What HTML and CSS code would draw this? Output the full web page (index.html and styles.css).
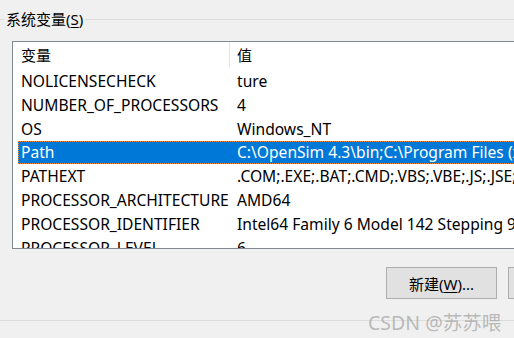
FILE: index.html
```html
<!DOCTYPE html>
<html lang="zh-CN">
<head>
    <meta charset="UTF-8">
    <title>系统变量</title>
    <link rel="stylesheet" href="styles.css">
</head>
<body>
    <div class="group-head">
        <span class="rule-short"></span>
        <span class="group-label">系统变量(<u>S</u>)</span>
        <span class="rule"></span>
    </div>

    <div class="listview">
        <div class="lv-row lv-head">
            <div class="col-name">变量</div>
            <div class="col-value">值</div>
        </div>
        <div class="lv-row">
            <div class="col-name">NOLICENSECHECK</div>
            <div class="col-value">ture</div>
        </div>
        <div class="lv-row">
            <div class="col-name">NUMBER_OF_PROCESSORS</div>
            <div class="col-value">4</div>
        </div>
        <div class="lv-row">
            <div class="col-name">OS</div>
            <div class="col-value">Windows_NT</div>
        </div>
        <div class="lv-row selected">
            <div class="col-name">Path</div>
            <div class="col-value">C:\OpenSim 4.3\bin;C:\Program Files (x86)\Common Files\Oracle\Java\javapath</div>
        </div>
        <div class="lv-row">
            <div class="col-name">PATHEXT</div>
            <div class="col-value">.COM;.EXE;.BAT;.CMD;.VBS;.VBE;.JS;.JSE;.WSF;.WSH;.MSC</div>
        </div>
        <div class="lv-row">
            <div class="col-name">PROCESSOR_ARCHITECTURE</div>
            <div class="col-value">AMD64</div>
        </div>
        <div class="lv-row">
            <div class="col-name">PROCESSOR_IDENTIFIER</div>
            <div class="col-value">Intel64 Family 6 Model 142 Stepping 9, GenuineIntel</div>
        </div>
        <div class="lv-row">
            <div class="col-name">PROCESSOR_LEVEL</div>
            <div class="col-value">6</div>
        </div>
    </div>

    <div class="buttons">
        <button>新建(<u>W</u>)...</button>
        <button>编辑(<u>I</u>)...</button>
    </div>

    <div class="bottom-rule"></div>

    <div class="watermark">CSDN @苏苏喂</div>
</body>
</html>
```

FILE: styles.css
```css
html, body {
    margin: 0;
    height: 100%;
    overflow: hidden;
}
body {
    position: relative;
    background-color: #f0f0f0;
    font-family: "Noto Sans", "Noto Sans CJK SC", sans-serif;
    font-size: 15px;
    color: #000;
}
u {
    text-decoration-thickness: 1px;
    text-underline-offset: 2px;
}
.group-head {
    display: flex;
    align-items: center;
    height: 38px;
}
.rule-short {
    width: 4px;
    border-top: 1px solid #dcdcdc;
}
.group-label {
    padding: 0 2px;
    line-height: 20px;
}
.rule {
    flex: 1;
    border-top: 1px solid #dcdcdc;
}
.listview {
    margin: 3px 0 0 12px;
    width: 620px;
    height: 206px;
    border: 1px solid #828790;
    background-color: #fff;
    overflow: hidden;
    font-size: 15.6px;
}
.lv-row {
    display: flex;
    height: 24px;
    line-height: 24px;
    white-space: nowrap;
}
.lv-head {
    height: 27px;
    line-height: 26px;
    font-size: 15px;
}
.col-name {
    width: 217px;
    padding-left: 8px;
    box-sizing: border-box;
    flex-shrink: 0;
}
.col-value {
    padding-left: 7px;
}
.lv-head .col-name {
    border-right: 1px solid #e5e5e5;
    height: 25px;
}
.lv-row.selected {
    margin-left: 5px;
    height: 23px;
    line-height: 23px;
    background-color: #0078d7;
    color: #fff;
    outline: 1px dotted #ff8a28;
    outline-offset: -1px;
}
.lv-row.selected .col-name {
    width: 212px;
    padding-left: 3px;
}
.buttons {
    display: flex;
    gap: 11px;
    margin: 18px 0 0 386px;
}
.buttons button {
    flex-shrink: 0;
    width: 111px;
    height: 32px;
    padding: 0;
    background-color: #e1e1e1;
    border: 1px solid #adadad;
    font-family: inherit;
    font-size: 15px;
    color: #000;
}
.bottom-rule {
    margin-top: 21px;
    border-top: 1px solid #dcdcdc;
}
.watermark {
    position: absolute;
    left: 368px;
    top: 307px;
    font-size: 19.5px;
    color: rgba(160, 160, 160, 0.7);
    white-space: nowrap;
}
```
